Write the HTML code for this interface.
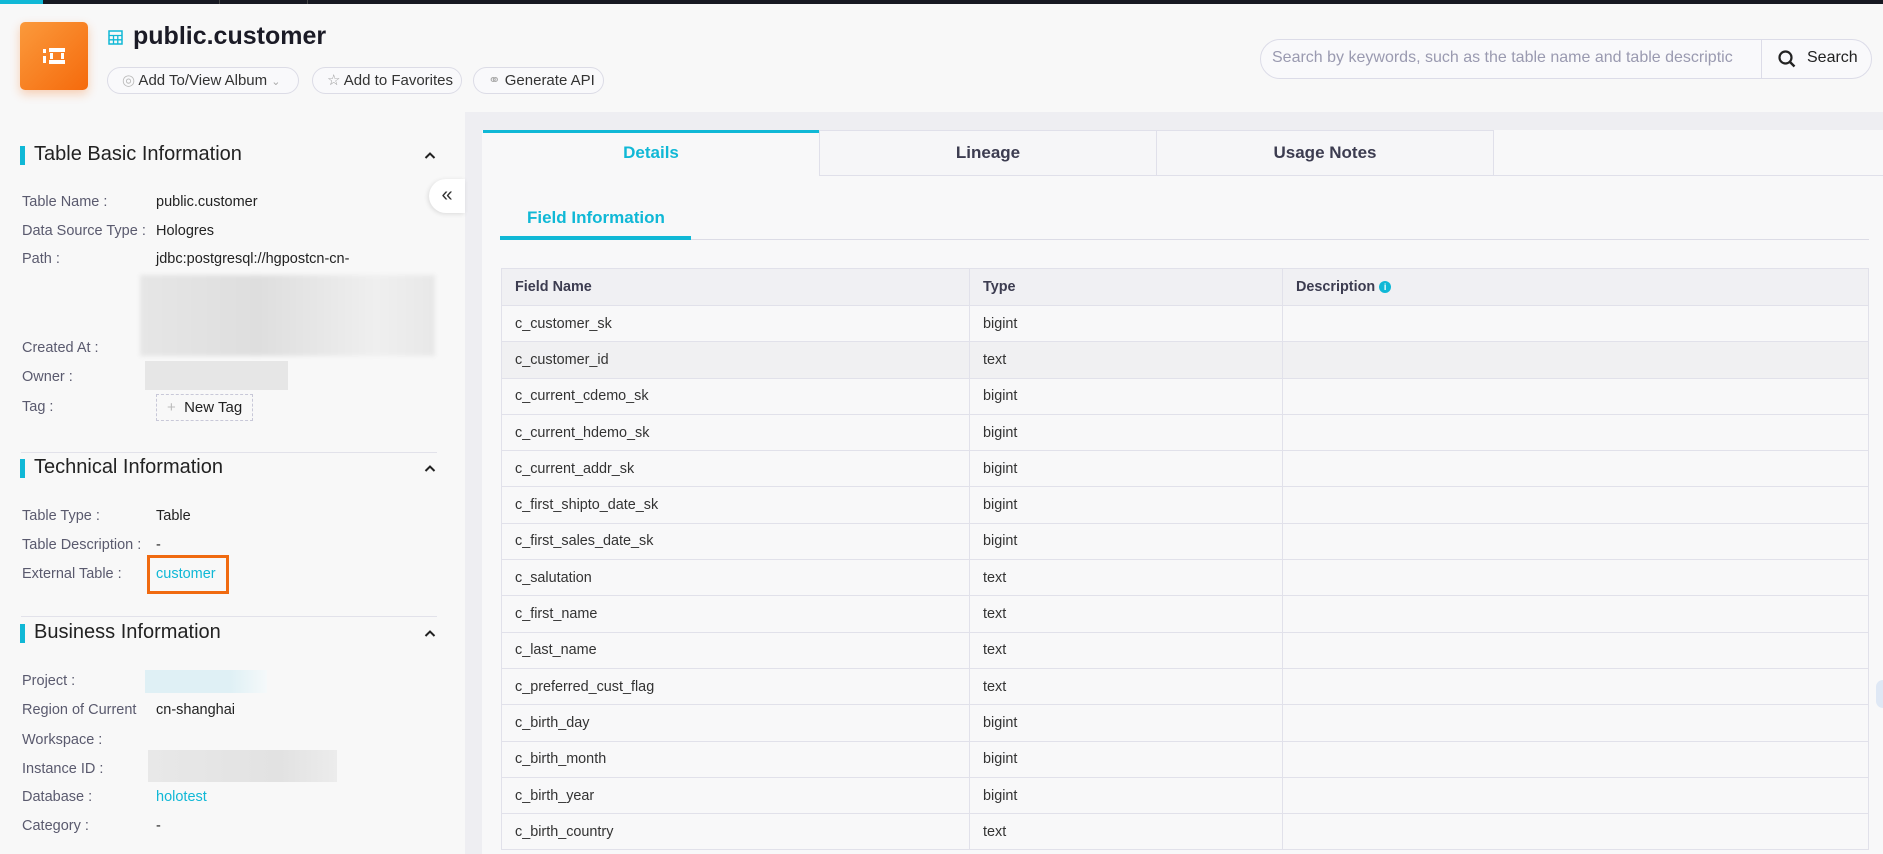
<!DOCTYPE html>
<html style="width:1883px;height:854px;overflow:hidden"><head><meta charset="utf-8"><style>
*{box-sizing:border-box;margin:0;padding:0}
body{width:1883px;height:854px;overflow:hidden;background:#f8f8f8;font-family:"Liberation Sans",sans-serif;position:relative;color:#333}
.a{position:absolute}
.topbar{left:0;top:0;width:1883px;height:4px;background:#171922}
.lbl{position:absolute;left:22px;font-size:14.5px;color:#5a5a6e;white-space:nowrap}
.val{position:absolute;left:156px;font-size:14.5px;color:#222;white-space:nowrap}
.sec{position:absolute;left:20px;font-size:20px;color:#222;padding-left:14px;white-space:nowrap}
.sec:before{content:"";position:absolute;left:0;top:3px;width:5px;height:19px;background:#10b8d6}
.caret{position:absolute;left:424px;width:12px;height:8px}
.btn{position:absolute;top:67px;height:27px;border:1px solid #dcdce6;border-radius:14px;font-size:15px;color:#333;line-height:25px;padding-left:14px;white-space:nowrap;background:#f9f9fb}
table{position:absolute;left:501px;top:268px;width:1368px;border-collapse:collapse;font-size:14.4px}
td,th{border:1px solid #e1e1ea;height:36.3px;padding:0 13px;text-align:left;color:#333;font-weight:normal}
th{background:#f0f0f3;font-weight:bold;color:#3c3c50;height:37px}
tr.h td{background:#f0f0f2}
</style></head><body>
<div class="a topbar"></div>
<div class="a" style="left:0;top:0;width:43px;height:4px;background:#10b8d6"></div>
<div class="a" style="left:219px;top:0;width:1px;height:4px;background:#444"></div>
<div class="a" style="left:307px;top:0;width:1px;height:4px;background:#444"></div>

<div class="a" style="left:20px;top:22px;width:68px;height:68px;border-radius:5px;background:linear-gradient(135deg,#fb9a3c,#f56a0c);box-shadow:0 4px 10px rgba(245,110,20,.3)"></div>
<svg class="a" style="left:42px;top:45px" width="26" height="22" viewBox="0 0 26 22"><g fill="#fff"><rect x="1" y="4" width="3" height="4"/><rect x="1" y="11" width="3" height="7"/><path d="M7 3h16v4H7zM7 15h16v4H7z"/><rect x="8" y="8" width="3" height="6"/><rect x="19" y="8" width="3" height="6"/></g></svg>

<svg class="a" style="left:108px;top:30px" width="15" height="15" viewBox="0 0 15 15"><rect x="1" y="1" width="13" height="13" fill="none" stroke="#10b8d6" stroke-width="1.5"/><path d="M1 5.5h13M1 9.8h13M5.5 5.5v8.5M9.8 5.5v8.5" stroke="#10b8d6" stroke-width="1.3"/></svg>
<div class="a" style="left:133px;top:22px;font-size:25px;font-weight:bold;color:#1b1b26">public.customer</div>

<div class="btn" style="left:107px;width:192px"><span style="color:#bbb">◎</span> Add To/View Album <span style="color:#aaa;font-size:11px">⌄</span></div>
<div class="btn" style="left:312px;width:150px"><span style="color:#999">☆</span> Add to Favorites</div>
<div class="btn" style="left:473px;width:131px"><span style="color:#aaa">⚭</span> Generate API</div>

<div class="a" style="left:1260px;top:39px;width:612px;height:40px;border:1.5px solid #dcdce8;border-radius:20px;background:#f9f9fb"></div>
<div class="a" style="left:1272px;top:49px;font-size:16px;color:#9a9ab0;white-space:nowrap;width:478px;overflow:hidden">Search by keywords, such as the table name and table descriptic</div>
<div class="a" style="left:1761px;top:40px;width:1px;height:38px;background:#dcdce8"></div>
<svg class="a" style="left:1777px;top:49px" width="20" height="20" viewBox="0 0 20 20"><circle cx="8.5" cy="8.5" r="6" fill="none" stroke="#222" stroke-width="2.2"/><path d="M13 13l4.5 4.5" stroke="#222" stroke-width="2.4"/></svg>
<div class="a" style="left:1807px;top:49px;font-size:16px;color:#222">Search</div>

<div class="a" style="left:465px;top:112px;width:1418px;height:742px;background:#eeeef2"></div>
<div class="a" style="left:482px;top:130px;width:1401px;height:724px;background:#f8f8f9"></div>

<div class="a" style="left:483px;top:130px;width:336px;height:46px;background:#f8f8f9;border-top:3px solid #10b8d6;text-align:center;line-height:40px;font-size:17px;font-weight:bold;color:#10b8d6">Details</div>
<div class="a" style="left:819px;top:130px;width:338px;height:46px;background:#f6f6f8;border:1px solid #e0e0ea;text-align:center;line-height:44px;font-size:17px;font-weight:bold;color:#3c3c50">Lineage</div>
<div class="a" style="left:1156px;top:130px;width:338px;height:46px;background:#f6f6f8;border:1px solid #e0e0ea;text-align:center;line-height:44px;font-size:17px;font-weight:bold;color:#3c3c50">Usage Notes</div>
<div class="a" style="left:1494px;top:175px;width:389px;height:1px;background:#e0e0ea"></div>

<div class="a" style="left:527px;top:208px;font-size:17px;font-weight:bold;color:#10b8d6">Field Information</div>
<div class="a" style="left:500px;top:239px;width:1369px;height:1px;background:#dcdce6"></div>
<div class="a" style="left:500px;top:236px;width:191px;height:4px;background:#10b8d6"></div>

<table>
<colgroup><col style="width:468px"><col style="width:313px"><col></colgroup>
<tr><th>Field Name</th><th>Type</th><th>Description <span style="display:inline-block;width:12px;height:12px;border-radius:50%;background:#10b8d6;color:#fff;font-size:9px;text-align:center;line-height:12px;vertical-align:1px">i</span></th></tr>
<tr><td>c_customer_sk</td><td>bigint</td><td></td></tr>
<tr class="h"><td>c_customer_id</td><td>text</td><td></td></tr>
<tr><td>c_current_cdemo_sk</td><td>bigint</td><td></td></tr>
<tr><td>c_current_hdemo_sk</td><td>bigint</td><td></td></tr>
<tr><td>c_current_addr_sk</td><td>bigint</td><td></td></tr>
<tr><td>c_first_shipto_date_sk</td><td>bigint</td><td></td></tr>
<tr><td>c_first_sales_date_sk</td><td>bigint</td><td></td></tr>
<tr><td>c_salutation</td><td>text</td><td></td></tr>
<tr><td>c_first_name</td><td>text</td><td></td></tr>
<tr><td>c_last_name</td><td>text</td><td></td></tr>
<tr><td>c_preferred_cust_flag</td><td>text</td><td></td></tr>
<tr><td>c_birth_day</td><td>bigint</td><td></td></tr>
<tr><td>c_birth_month</td><td>bigint</td><td></td></tr>
<tr><td>c_birth_year</td><td>bigint</td><td></td></tr>
<tr><td>c_birth_country</td><td>text</td><td></td></tr>
</table>

<svg width="0" height="0" style="position:absolute"><defs><path id="cr" d="M1.5 7L6 2.5 10.5 7" fill="none" stroke="#222" stroke-width="2"/></defs></svg>
<div class="sec" style="top:143px">Table Basic Information</div><svg class="caret" style="top:151px" viewBox="0 0 12 8"><use href="#cr"/></svg>
<div class="a" style="left:429px;top:179px;width:36px;height:34px;background:#fff;border-radius:17px 0 0 17px;box-shadow:-1px 1px 5px rgba(0,0,0,.12);text-align:center;line-height:32px;font-size:20px;color:#333">«</div>
<div class="lbl" style="top:194px">Table Name :</div><div class="val" style="top:194px">public.customer</div>
<div class="lbl" style="top:223px">Data Source Type :</div><div class="val" style="top:223px">Hologres</div>
<div class="lbl" style="top:251px">Path :</div><div class="val" style="top:251px">jdbc:postgresql://hgpostcn-cn-</div>
<div class="a" style="left:140px;top:275px;width:295px;height:81px;background:linear-gradient(90deg,#e6e6e6,#dedede 40%,#efefef 80%,#e8e8e8);filter:blur(2px)"></div>
<div class="lbl" style="top:340px">Created At :</div>
<div class="lbl" style="top:369px">Owner :</div>
<div class="a" style="left:145px;top:361px;width:143px;height:29px;background:#e6e6e6"></div>
<div class="lbl" style="top:399px">Tag :</div>
<div class="a" style="left:156px;top:394px;width:97px;height:27px;border:1px dashed #c8c8d8;font-size:15px;line-height:25px;padding-left:10px;color:#222"><span style="color:#bbb">+</span>&nbsp; New Tag</div>

<div class="a" style="left:21px;top:452px;width:416px;height:1px;background:#e2e2ea"></div>
<div class="sec" style="top:456px">Technical Information</div><svg class="caret" style="top:464px" viewBox="0 0 12 8"><use href="#cr"/></svg>
<div class="lbl" style="top:508px">Table Type :</div><div class="val" style="top:508px">Table</div>
<div class="lbl" style="top:537px">Table Description :</div><div class="val" style="top:537px">-</div>
<div class="lbl" style="top:566px">External Table :</div><div class="val" style="top:566px;color:#10b8d6">customer</div>
<div class="a" style="left:147px;top:555px;width:82px;height:39px;border:3px solid #f06a10"></div>

<div class="a" style="left:21px;top:616px;width:416px;height:1px;background:#e2e2ea"></div>
<div class="sec" style="top:621px">Business Information</div><svg class="caret" style="top:629px" viewBox="0 0 12 8"><use href="#cr"/></svg>
<div class="lbl" style="top:673px">Project :</div>
<div class="a" style="left:145px;top:670px;width:122px;height:23px;background:linear-gradient(90deg,#dff0f5 70%,#f5f9fa)"></div>
<div class="lbl" style="top:702px">Region of Current</div><div class="val" style="top:702px">cn-shanghai</div>
<div class="lbl" style="top:732px">Workspace :</div>
<div class="lbl" style="top:761px">Instance ID :</div>
<div class="a" style="left:148px;top:750px;width:189px;height:32px;background:linear-gradient(90deg,#e8e8e8,#e2e2e2 70%,#ececec)"></div>
<div class="lbl" style="top:789px">Database :</div><div class="val" style="top:789px;color:#10b8d6">holotest</div>
<div class="lbl" style="top:818px">Category :</div><div class="val" style="top:818px">-</div>
<div class="a" style="left:1876px;top:680px;width:14px;height:28px;border-radius:14px;background:#dfe8f5"></div>
</body></html>
